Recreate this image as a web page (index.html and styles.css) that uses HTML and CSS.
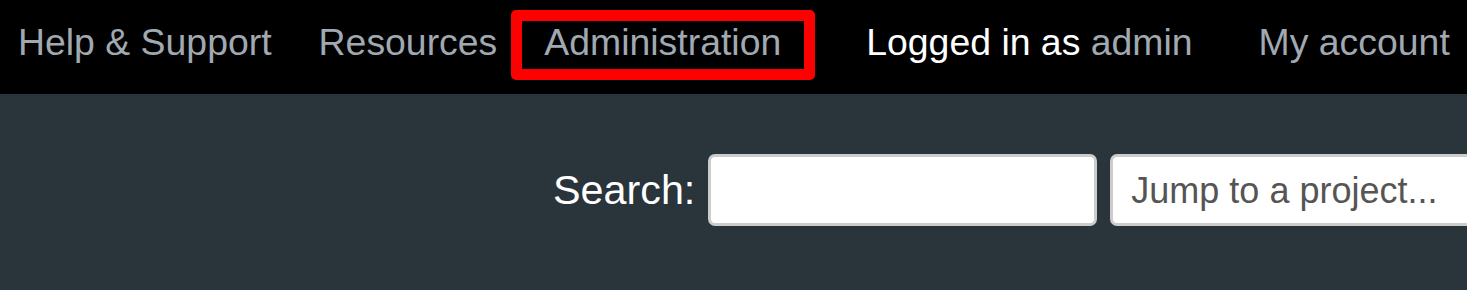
FILE: index.html
```html
<!DOCTYPE html>
<html>
<head>
<meta charset="utf-8">
<link rel="stylesheet" href="styles.css">
</head>
<body>
<div class="top-menu">
  <a class="nav-link" href="#">Help &amp; Support</a>
  <a class="nav-link" href="#">Resources</a>
  <a class="nav-link highlighted" href="#">Administration</a>
  <div class="loggedas">Logged in as <a class="user" href="#">admin</a></div>
  <a class="nav-link" href="#">My account</a>
</div>
<div class="header">
  <div class="quick-search">
    <label class="search-label" for="q">Search:</label>
    <input class="search-input" id="q" type="text">
    <div class="jump-box">Jump to a project...</div>
  </div>
</div>
</body>
</html>
```

FILE: styles.css
```css
html, body {
  margin: 0;
  padding: 0;
}
body {
  background: #2a343b;
  font-family: "Liberation Sans", Arial, sans-serif;
  overflow: hidden;
  width: 1467px;
  height: 290px;
}
.top-menu {
  background: #000;
  height: 94px;
  box-sizing: border-box;
  padding: 21px 0 0 18px;
  display: flex;
  align-items: flex-start;
  font-size: 37.4px;
  line-height: 42px;
  white-space: nowrap;
}
.nav-link {
  color: #a0a9b1;
  text-decoration: none;
  margin-right: 47px;
}
.highlighted {
  margin: -11px 0 0 -33px;
  padding: 0 23px 6px 22px;
  border: 11px solid #ff0000;
  border-radius: 5px;
  margin-right: 51px;
}
.loggedas {
  color: #fff;
  margin-right: 66px;
}
.user {
  color: #a0a9b1;
  text-decoration: none;
}
.header {
  padding: 60px 0 0 553px;
}
.quick-search {
  display: flex;
  align-items: center;
  white-space: nowrap;
}
.search-label {
  color: #fff;
  font-size: 41.3px;
  margin-right: 13px;
  flex-shrink: 0;
}
.search-input {
  box-sizing: border-box;
  width: 389px;
  height: 72px;
  border: 3px solid #cccccc;
  border-radius: 7px;
  background: #fff;
  margin: 0 13px 0 0;
  padding: 0;
  flex-shrink: 0;
}
.jump-box {
  box-sizing: border-box;
  width: 420px;
  height: 72px;
  border: 3px solid #cccccc;
  border-radius: 7px;
  background: #fff;
  color: #555;
  font-size: 36px;
  padding: 2px 18px 0;
  display: flex;
  align-items: center;
  flex-shrink: 0;
}
```
